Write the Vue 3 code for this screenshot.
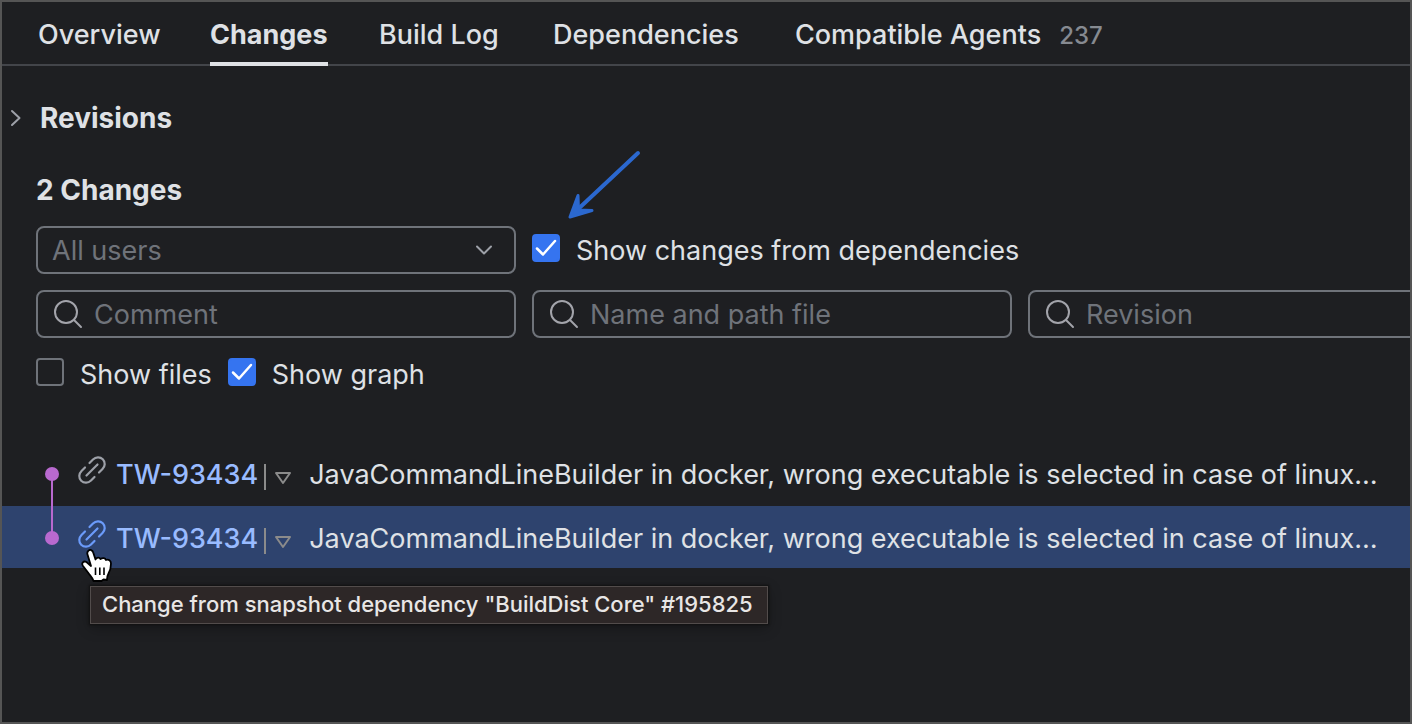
<script setup>
import { ref } from 'vue'

const tabs = ref([
  { title: 'Overview' },
  { title: 'Changes', active: true },
  { title: 'Build Log' },
  { title: 'Dependencies' },
  { title: 'Compatible Agents', count: 237 },
])

const searches = [
  { id: 'comment', label: 'Comment' },
  { id: 'path', label: 'Name and path file' },
  { id: 'revision', label: 'Revision' },
]

const showDependencies = ref(true)
const showFiles = ref(false)
const showGraph = ref(true)

const message = 'JavaCommandLineBuilder in docker, wrong executable is selected in case of linux…'
const changes = [
  { id: 1, issue: 'TW-93434', message, hovered: false },
  { id: 2, issue: 'TW-93434', message, hovered: true },
]
</script>

<template>
  <div class="page">
    <nav class="tabs">
      <a
        v-for="tab in tabs"
        :key="tab.title"
        href="#"
        class="tab"
        :class="{ active: tab.active }"
      >{{ tab.title }}<span v-if="tab.count" class="count">{{ tab.count }}</span></a>
    </nav>

    <main>
      <button class="revisions" type="button">
        <svg width="12" height="20" viewBox="0 0 12 20" fill="none" stroke="#9da0a8" stroke-width="2" stroke-linecap="round" stroke-linejoin="round">
          <path d="M2 3 9.500 10 2 17" />
        </svg>
        <span>Revisions</span>
      </button>

      <section class="filters">
        <h2>2 Changes</h2>
        <div class="row">
          <div class="select">
            <select aria-label="Users">
              <option>All users</option>
            </select>
            <svg class="chevron" width="20" height="12" viewBox="0 0 20 12" fill="none" stroke="#9da0a8" stroke-width="2" stroke-linecap="round" stroke-linejoin="round">
              <path d="M3 2.5 10 9.5 17 2.5" />
            </svg>
          </div>
          <label class="check">
            <span class="box">
              <input v-model="showDependencies" type="checkbox">
              <svg viewBox="0 0 28 28"><path d="M5 14.5 11 20.5 23 7" /></svg>
            </span>
            <span class="caption">Show changes from dependencies</span>
          </label>
          <svg class="arrow" width="76" height="72" viewBox="0 0 76 72" fill="none" stroke="#2b68cf" stroke-width="4" stroke-linecap="round" stroke-linejoin="round">
            <path d="M72 5 9 64" />
            <path fill="#2b68cf" stroke-width="3" d="M12 47.500 4 69 26 62.500 12.500 62Z" />
          </svg>
        </div>

        <div class="row searches">
          <div v-for="item in searches" :key="item.id" class="search">
            <svg width="32" height="32" viewBox="0 0 32 32" fill="none" stroke="#a3a4ab" stroke-width="2" stroke-linecap="round">
              <circle cx="14" cy="14" r="11" />
              <path d="M22 22 29 29" />
            </svg>
            <input type="text" :aria-label="item.label" :placeholder="item.label">
          </div>
        </div>

        <div class="row checks">
          <label class="check">
            <span class="box">
              <input v-model="showFiles" type="checkbox">
              <svg viewBox="0 0 28 28"><path d="M5 14.5 11 20.5 23 7" /></svg>
            </span>
            <span class="caption">Show files</span>
          </label>
          <label class="check">
            <span class="box">
              <input v-model="showGraph" type="checkbox">
              <svg viewBox="0 0 28 28"><path d="M5 14.5 11 20.5 23 7" /></svg>
            </span>
            <span class="caption">Show graph</span>
          </label>
        </div>
      </section>

      <ul class="changes">
        <li v-for="change in changes" :key="change.id" class="change" :class="{ hovered: change.hovered }">
          <span class="node" />
          <svg class="link" width="28" height="28" viewBox="0 0 28 28" fill="none" stroke="currentColor" stroke-width="2.2" stroke-linecap="round">
            <path d="M8.5 19.5 19.5 8.5" />
            <path d="M11.5 7 15 3.500C17.800.7 22 .5 24.800 3.200 27.500 6 27.300 10.200 24.500 13L21 16.500" />
            <path d="M7 11.500 3.500 15C.7 17.800.5 22 3.200 24.800 6 27.500 10.200 27.300 13 24.500L16.500 21" />
          </svg>
          <a href="#" class="issue">{{ change.issue }}</a>
          <span class="divider" />
          <button class="toggle" type="button" aria-label="Issue details">
            <svg width="18" height="14" viewBox="0 0 18 14" fill="none" stroke="#8b8b8b" stroke-width="2" stroke-linejoin="round">
              <path d="M2 2H16L9 12Z" />
            </svg>
          </button>
          <span class="message">{{ change.message }}</span>
          <template v-if="change.hovered">
            <svg class="cursor" width="34" height="36" viewBox="0 0 34 36">
              <path fill="#fff" stroke="#000" stroke-width="1.8" stroke-linejoin="round" d="M7.200 3C9 1 11.500 2 12.200 4.500L14.500 11.500C15.500 9 18.500 9 19.500 11 21.500 9.500 24.500 10 25 12 27.500 11 30 12.500 30 15.500 30 19 29.500 22 27.500 25.500 26 28 26 30 26 32L22.500 31.500 20.500 33H12.500C12 30 9 27.500 7 24.500L2 18C0 15 2.500 12.500 5.500 14L10 18 6.500 6.500C6 5 6.200 4 7.200 3Z" />
              <path stroke="#000" stroke-width="1.6" d="M14.500 19.500V27M18.800 19.500V27M23 19.500V27" />
            </svg>
            <span class="tooltip" role="tooltip">Change from snapshot dependency "BuildDist Core" #195825</span>
          </template>
        </li>
      </ul>
    </main>
  </div>
</template>

<style>
body {
  background: #1e1f22;
}
</style>

<style scoped>
* {
  box-sizing: border-box;
}

.page {
  min-height: 100vh;
  border: 2px solid #555;
  overflow: hidden;
  background: #1e1f22;
  color: #dfe1e5;
  font: 27px/32px Inter, "Liberation Sans", sans-serif;
}

.tabs {
  display: grid;
  grid-template-columns: 172px 169px 174px 242px auto;
  height: 64px;
  padding-left: 36px;
  border-bottom: 2px solid #43454a;
  font-weight: 450;
}

.tab {
  justify-self: start;
  height: 64px;
  padding-top: 17px;
  color: inherit;
  text-decoration: none;
  white-space: nowrap;
}

.tab.active {
  border-bottom: 4px solid #dfe1e5;
  font-weight: 700;
}

.count {
  margin-left: 18px;
  color: #868a91;
  font-size: 24px;
}

button,
input,
select {
  margin: 0;
  padding: 0;
  border: 0;
  background: none;
  color: inherit;
  font: inherit;
}

.revisions {
  display: flex;
  align-items: center;
  gap: 18px;
  margin: 36px 0 0 8px;
  font-size: 28px;
  font-weight: 700;
}

.filters {
  padding-left: 34px;
}

h2 {
  margin: 40px 0 20px;
  font: inherit;
  font-size: 28px;
  font-weight: 700;
}

.row {
  position: relative;
  display: flex;
  gap: 16px;
}

.select,
.search {
  position: relative;
  display: flex;
  flex: 0 0 480px;
  align-items: center;
  min-width: 0;
  height: 48px;
  border: 2px solid #6f737a;
  border-radius: 8px;
  color: #6f737a;
}

.select select {
  width: 100%;
  height: 100%;
  padding: 2px 0 0 14px;
  appearance: none;
}

.chevron {
  position: absolute;
  right: 20px;
  pointer-events: none;
}

.searches {
  margin-top: 16px;
}

.search {
  gap: 10px;
  padding-left: 14px;
}

.search input {
  flex: 1;
  min-width: 0;
  padding-top: 2px;
  outline: 0;
}

.search input::placeholder {
  color: #6f737a;
  opacity: 1;
}

.checks {
  height: 32px;
  margin-top: 20px;
}

.check {
  display: flex;
  align-items: center;
  gap: 16px;
  white-space: nowrap;
}

.caption {
  padding-top: 2px;
}

.box {
  position: relative;
  width: 28px;
  height: 28px;
  margin-bottom: 4px;
}

.box input {
  display: block;
  width: 28px;
  height: 28px;
  border: 2px solid #6f737a;
  border-radius: 4px;
  appearance: none;
}

.box input:checked {
  border-color: #3574f0;
  background: #3574f0;
}

.box svg {
  position: absolute;
  inset: 0;
  fill: none;
  stroke: #fff;
  stroke-width: 2.5;
  stroke-linecap: round;
  stroke-linejoin: round;
  pointer-events: none;
  visibility: hidden;
}

.box input:checked + svg {
  visibility: visible;
}

.arrow {
  position: absolute;
  bottom: 54px;
  left: 530px;
}

.changes {
  display: grid;
  gap: 2px;
  margin: 52px 0 0;
  padding: 0;
  list-style: none;
}

.change {
  position: relative;
  display: flex;
  align-items: center;
  height: 62px;
  padding: 2px 0 0 43px;
}

.change.hovered {
  background: #2e436e;
}

.node {
  position: relative;
  width: 14px;
  height: 14px;
  border-radius: 50%;
  background: #b869cf;
}

.hovered .node::before {
  position: absolute;
  bottom: 7px;
  left: 6px;
  width: 2px;
  height: 64px;
  background: #b869cf;
  content: "";
}

.link {
  margin: 0 10px 8px 19px;
  color: #9da0a8;
}

.hovered .link {
  color: #6b9bfa;
}

.issue {
  padding-top: 2px;
  color: #99bbff;
  font-weight: 450;
  text-decoration: none;
}

.divider {
  width: 2px;
  height: 26px;
  margin: 6px 8px 0 6px;
  background: #8b8b8b;
}

.toggle {
  display: flex;
  margin: 8px 17px 0 0;
}

.message {
  padding-top: 2px;
  white-space: nowrap;
}

.cursor {
  position: absolute;
  top: 42px;
  left: 79px;
  z-index: 2;
}

.tooltip {
  position: absolute;
  top: 80px;
  left: 88px;
  padding: 1px 14px 3px 11px;
  border: 1px solid #524c4b;
  background: #2d2727;
  box-shadow: 0 0 2px 1px #111, 0 4px 14px rgba(0, 0, 0, 0.3);
  color: #e8e6e5;
  font-size: 22px;
  font-weight: 500;
  white-space: nowrap;
}
</style>
